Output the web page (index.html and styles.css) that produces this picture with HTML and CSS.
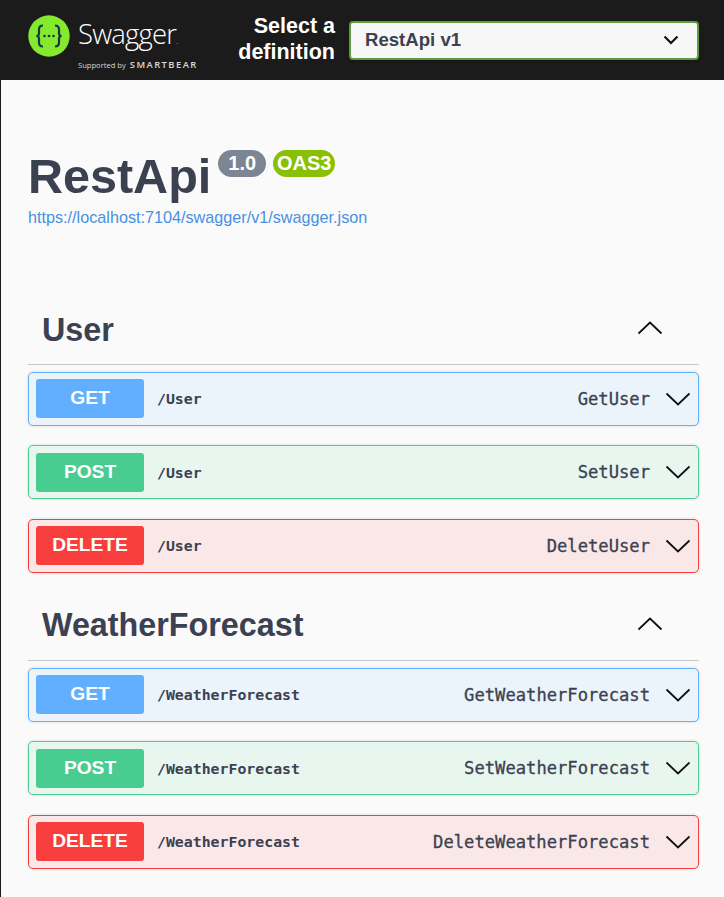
FILE: index.html
```html
<!DOCTYPE html>
<html lang="en">
<head>
<meta charset="utf-8">
<title>Swagger UI</title>
<link rel="stylesheet" href="styles.css">
</head>
<body>
<header class="topbar">
  <a class="logo">
    <svg class="logo-mark" viewBox="0 0 42 42" width="42" height="42">
      <circle cx="21" cy="21" r="20.7" fill="#85ea2d"/>
      <path d="M15 10.5c-3 0-4 1.400-4 4v3.700c0 1.800-.8 2.800-2.600 2.800 1.800 0 2.600 1 2.600 2.800v3.700c0 2.600 1 4 4 4M27 10.500c3 0 4 1.400 4 4v3.700c0 1.800.8 2.800 2.600 2.800-1.800 0-2.600 1-2.600 2.800v3.700c0 2.600-1 4-4 4" fill="none" stroke="#173647" stroke-width="2.200"/>
      <circle cx="16.500" cy="21" r="1.300" fill="#173647"/><circle cx="21" cy="21" r="1.300" fill="#173647"/><circle cx="25.500" cy="21" r="1.300" fill="#173647"/>
    </svg>
    <span class="logo-text">
      <span class="logo-name">Swagger<small>.</small></span>
      <span class="logo-sub"><span>Supported by</span> <b>SMARTBEAR</b></span>
    </span>
  </a>
  <label class="def-label">Select a definition</label>
  <div class="select"><span>RestApi v1</span>
    <svg viewBox="0 0 20 20" width="20" height="20"><path d="M3.500 6.500 10 13l6.500-6.500" fill="none" stroke="#111" stroke-width="2.200"/></svg>
  </div>
</header>
<main class="main">
  <section class="info">
    <div class="title-row">
      <h1>RestApi</h1>
      <span class="badge version">1.0</span>
      <span class="badge oas">OAS3</span>
    </div>
    <a class="spec-link">https://localhost:7104/swagger/v1/swagger.json</a>
  </section>

  <section class="tag tag-user">
    <div class="tag-head"><h2>User</h2><svg class="chev" viewBox="0 0 26 14" width="26" height="14"><path d="M1.500 12.500 13 1.500l11.500 11" fill="none" stroke="#111" stroke-width="1.800"/></svg></div>
    <div class="op get"><span class="method">GET</span><span class="path">/User</span><span class="opid">GetUser</span><svg class="chev" viewBox="0 0 26 14" width="26" height="14"><path d="M1.500 1.500 13 12.500l11.500-11" fill="none" stroke="#111" stroke-width="1.800"/></svg></div>
    <div class="op post"><span class="method">POST</span><span class="path">/User</span><span class="opid">SetUser</span><svg class="chev" viewBox="0 0 26 14" width="26" height="14"><path d="M1.500 1.500 13 12.500l11.500-11" fill="none" stroke="#111" stroke-width="1.800"/></svg></div>
    <div class="op delete"><span class="method">DELETE</span><span class="path">/User</span><span class="opid">DeleteUser</span><svg class="chev" viewBox="0 0 26 14" width="26" height="14"><path d="M1.500 1.500 13 12.500l11.500-11" fill="none" stroke="#111" stroke-width="1.800"/></svg></div>
  </section>

  <section class="tag">
    <div class="tag-head"><h2>WeatherForecast</h2><svg class="chev" viewBox="0 0 26 14" width="26" height="14"><path d="M1.500 12.500 13 1.500l11.500 11" fill="none" stroke="#111" stroke-width="1.800"/></svg></div>
    <div class="op get"><span class="method">GET</span><span class="path">/WeatherForecast</span><span class="opid">GetWeatherForecast</span><svg class="chev" viewBox="0 0 26 14" width="26" height="14"><path d="M1.500 1.500 13 12.500l11.500-11" fill="none" stroke="#111" stroke-width="1.800"/></svg></div>
    <div class="op post"><span class="method">POST</span><span class="path">/WeatherForecast</span><span class="opid">SetWeatherForecast</span><svg class="chev" viewBox="0 0 26 14" width="26" height="14"><path d="M1.500 1.500 13 12.500l11.500-11" fill="none" stroke="#111" stroke-width="1.800"/></svg></div>
    <div class="op delete"><span class="method">DELETE</span><span class="path">/WeatherForecast</span><span class="opid">DeleteWeatherForecast</span><svg class="chev" viewBox="0 0 26 14" width="26" height="14"><path d="M1.500 1.500 13 12.500l11.500-11" fill="none" stroke="#111" stroke-width="1.800"/></svg></div>
  </section>
</main>
</body>
</html>
```
FILE: styles.css
```css
* { box-sizing: border-box; }
html, body { margin: 0; padding: 0; }
body {
  width: 724px;
  height: 897px;
  overflow: hidden;
  background: #fafafa;
  border-left: 1px solid #1b1b1b;
  font-family: "Liberation Sans", Arial, sans-serif;
  color: #3b4151;
}
.topbar {
  height: 80px;
  margin-left: -1px;
  padding: 0 25px 0 28px;
  background: #1b1b1b;
  display: flex;
  align-items: center;
}
.logo { display: flex; align-items: flex-start; gap: 8px; width: 210px; height: 42px; margin-top: -9px; }
.logo-mark { flex: none; }
.logo-text { display: flex; flex-direction: column; color: #fff; }
.logo-name { font-family: "Open Sans", sans-serif; font-weight: 300; font-size: 27.500px; line-height: 30px; letter-spacing: -.8px; margin-top: 4px; }
.logo-name small { font-size: 8px; }
.logo-sub { font-family: "Open Sans", sans-serif; font-size: 7.600px; line-height: 10px; color: #d8d8d8; white-space: nowrap; margin-top: 4px; }
.logo-sub b { font-weight: 600; font-size: 9.400px; letter-spacing: 1.450px; margin-left: 2px; }
.def-label {
  width: 98px;
  margin-right: 14px;
  margin-left: -1px;
  margin-top: -2px;
  text-align: right;
  color: #fff;
  font-weight: 700;
  font-size: 21.500px;
  line-height: 26px;
}
.select {
  flex: 1;
  height: 39px;
  border: 2px solid #5d9c3f;
  border-radius: 4px;
  background: #f7f7f7;
  padding: 0 16px 0 14px;
  display: flex;
  align-items: center;
  justify-content: space-between;
  font-weight: 700;
  font-size: 18.600px;
  box-shadow: 0 1px 2px rgba(0,0,0,.25);
}
.main { padding: 0 25px 0 27px; }
.info { padding-top: 64px; }
.title-row { display: flex; align-items: flex-start; height: 61px; }
h1 { margin: 3px 0 0; font-size: 48.500px; line-height: 58px; font-weight: 700; }
.badge {
  height: 27px;
  border-radius: 14px;
  color: #fff;
  font-weight: 700;
  font-size: 20px;
  line-height: 26px;
  text-align: center;
  margin-top: 6px;
}
.version { width: 48px; background: #7d8492; margin-left: 7px; }
.oas { width: 62px; background: #89bf04; margin-left: 7px; }
.spec-link { display: block; font-size: 16.200px; line-height: 20px; color: #4990e2; margin-top: 2px; }
.tag-user { margin-top: 67px; }
.tag + .tag { margin-top: 17.300px; }
.tag-head {
  height: 71px;
  padding: 2px 35px 0 14px;
  border-bottom: 1px solid #c5c5c8;
  display: flex;
  align-items: center;
  justify-content: space-between;
}
.tag-head .chev { margin-bottom: 4px; margin-right: 1px; }
h2 { margin: 0; font-size: 32.300px; font-weight: 700; }
.op {
  height: 54px;
  margin-top: 6.700px;
  margin-bottom: 19.500px;
  padding: 6px 7px;
  border: 1px solid;
  border-radius: 5px;
  display: flex;
  align-items: center;
  box-shadow: 0 0 3px rgba(0,0,0,.15);
}
.op + .op { margin-top: 0; }
.op:last-child { margin-bottom: 0; }
.method {
  flex: none;
  width: 108px;
  height: 39px;
  border-radius: 3px;
  color: #fff;
  font-weight: 700;
  font-size: 19.200px;
  line-height: 37px;
  text-align: center;
}
.path { margin-left: 13px; margin-top: 1px; font: 700 14.850px "DejaVu Sans Mono", monospace; }
.opid { margin-left: auto; margin-right: 15px; font: 400 17.160px "DejaVu Sans Mono", monospace; -webkit-text-stroke: .3px #3b4151; }
.op .chev { flex: none; }
.get { background: #ebf3fb; border-color: #61affe; }
.get .method { background: #61affe; }
.post { background: #e8f6f0; border-color: #49cc90; }
.post .method { background: #49cc90; }
.delete { background: #fae7e7; border-color: #f93e3e; }
.delete .method { background: #f93e3e; }
```
